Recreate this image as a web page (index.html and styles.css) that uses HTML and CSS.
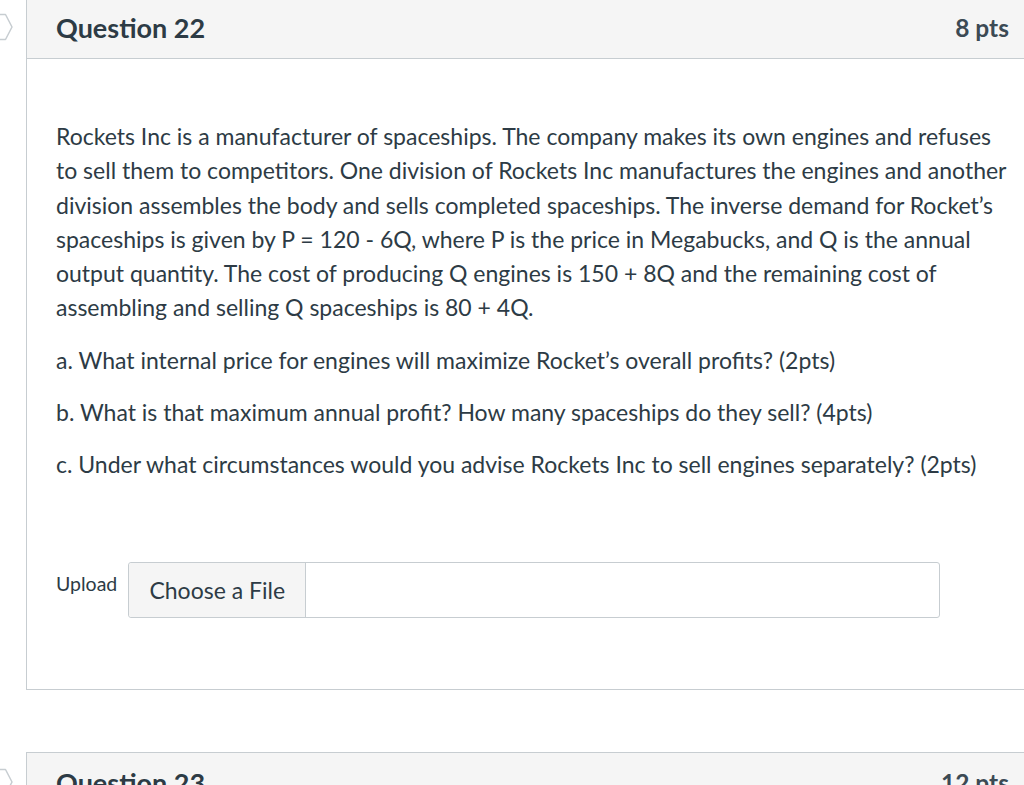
FILE: index.html
```html
<!DOCTYPE html>
<html>
<head>
<meta charset="utf-8">
<link rel="stylesheet" href="styles.css">
</head>
<body>
<div class="page">
  <div class="question-row">
    <div class="flag">
      <svg width="26" height="60" viewBox="0 0 26 60"><polygon points="-10,14.5 5.5,14.5 12,27 5.5,39.5 -10,39.5" fill="none" stroke="#c7cdd1" stroke-width="1.5" stroke-linejoin="round"/></svg>
    </div>
    <div class="card first">
      <div class="card-header">
        <span class="q-title">Question 22</span>
        <span class="q-pts">8 pts</span>
      </div>
      <div class="card-body">
        <p class="lead">Rockets Inc is a manufacturer of spaceships. The company makes its own engines and refuses to sell them to competitors. One division of Rockets Inc manufactures the engines and another division assembles the body and sells completed spaceships. The inverse demand for Rocket’s spaceships is given by P = 120 - 6Q, where P is the price in Megabucks, and Q is the annual output quantity. The cost of producing Q engines is 150 + 8Q and the remaining cost of assembling and selling Q spaceships is 80 + 4Q.</p>
        <p>a. What internal price for engines will maximize Rocket’s overall profits? (2pts)</p>
        <p>b. What is that maximum annual profit? How many spaceships do they sell? (4pts)</p>
        <p>c. Under what circumstances would you advise Rockets Inc to sell engines separately? (2pts)</p>
        <div class="upload">
          <span class="upload-label">Upload</span>
          <div class="file-input">
            <span class="file-btn">Choose a File</span>
          </div>
        </div>
      </div>
    </div>
  </div>
  <div class="question-row second">
    <div class="flag">
      <svg width="26" height="60" viewBox="0 0 26 60"><polygon points="-10,17.5 5.5,17.5 12,30 5.5,42.5 -10,42.5" fill="none" stroke="#c7cdd1" stroke-width="1.5" stroke-linejoin="round"/></svg>
    </div>
    <div class="card">
      <div class="card-header">
        <span class="q-title">Question 23</span>
        <span class="q-pts">12 pts</span>
      </div>
    </div>
  </div>
</div>
</body>
</html>
```

FILE: styles.css
```css
html, body {
  margin: 0;
  padding: 0;
  background: #ffffff;
  overflow: hidden;
}
body {
  width: 1024px;
  height: 785px;
  font-family: Lato, "Open Sans", sans-serif;
  color: #2d3b45;
}
.page {
  display: flex;
  flex-direction: column;
  gap: 62px;
  width: 1100px;
}
.question-row {
  display: flex;
  align-items: flex-start;
}
.flag {
  width: 26px;
  flex: none;
}
.flag svg {
  display: block;
}
.card {
  width: 1012px;
  flex: none;
  border: 1px solid #c7cdd1;
  border-top: none;
  background: #fff;
}
.second .card {
  border-top: 1px solid #c7cdd1;
}
.card-header {
  height: 59px;
  background: #f5f5f5;
  border-bottom: 1px solid #c7cdd1;
  display: flex;
  align-items: center;
  justify-content: space-between;
  padding: 0 30px 3px 29px;
  box-sizing: border-box;
}
.second .card-header {
  height: 60px;
  padding-bottom: 0;
}
.q-title {
  font-size: 27px;
  font-weight: 700;
  color: #2d3b45;
}
.q-pts {
  font-size: 24.5px;
  font-weight: 700;
  color: #3c4a54;
}
.card-body {
  padding: 60px 30px 71px 29px;
}
.card-body p {
  margin: 0 0 18px 0;
  font-size: 23px;
  line-height: 34.3px;
}
.card-body p:last-of-type {
  margin-bottom: 0;
}
.upload {
  display: flex;
  align-items: flex-start;
  gap: 11px;
  margin-top: 80px;
}
.upload-label {
  font-size: 19.5px;
  line-height: 20px;
  padding-top: 12px;
}
.file-input {
  width: 812px;
  height: 56px;
  box-sizing: border-box;
  border: 1px solid #c7cdd1;
  border-radius: 3px;
  display: flex;
}
.file-btn {
  width: 177px;
  box-sizing: border-box;
  background: #f5f5f5;
  border-right: 1px solid #c7cdd1;
  border-radius: 3px 0 0 3px;
  display: flex;
  align-items: center;
  justify-content: center;
  font-size: 23px;
  color: #2d3b45;
}
```
